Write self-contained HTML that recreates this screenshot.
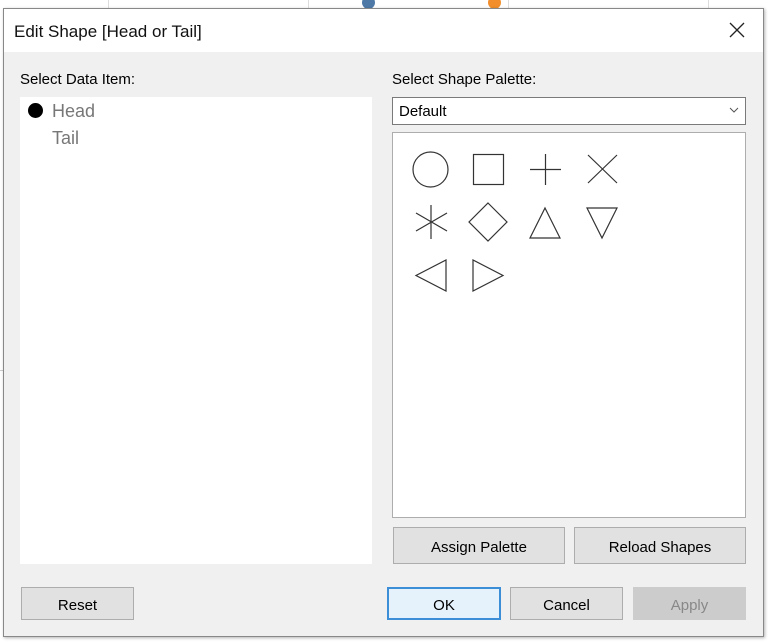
<!DOCTYPE html>
<html><head><style>
body{margin:0;width:768px;height:643px;background:#fff;position:relative;overflow:hidden;font-family:"Liberation Sans",sans-serif;}
.a{position:absolute;box-sizing:border-box;}
.btn{position:absolute;box-sizing:border-box;background:#e1e1e1;border:1px solid #adadad;font-size:15px;color:#000;display:flex;align-items:center;justify-content:center;padding-top:3px;}
.lbl{position:absolute;font-size:15px;color:#000;}
</style></head><body>
<div class="a" style="left:108px;top:0;width:1px;height:8px;background:#ddd"></div>
<div class="a" style="left:308px;top:0;width:1px;height:8px;background:#ddd"></div>
<div class="a" style="left:508px;top:0;width:1px;height:8px;background:#ddd"></div>
<div class="a" style="left:708px;top:0;width:1px;height:8px;background:#ddd"></div>
<div class="a" style="left:362px;top:-4px;width:13px;height:13px;border-radius:50%;background:#4e79a7"></div>
<div class="a" style="left:488px;top:-4px;width:13px;height:13px;border-radius:50%;background:#f28e2b"></div>
<div class="a" style="left:0;top:370px;width:4px;height:1px;background:#ccc"></div>
<div class="a" style="left:3px;top:8px;width:761px;height:629px;background:#f0f0f0;border:1px solid #888;box-shadow:1px 1px 3px rgba(0,0,0,.3)"></div>
<div class="a" style="left:4px;top:9px;width:759px;height:43px;background:#fff"></div>
<div class="lbl" style="left:14px;top:22px;font-size:17px;color:#111">Edit Shape [Head or Tail]</div>
<svg class="a" style="left:728px;top:21px" width="18" height="18"><path d="M2 2L16 16M16 2L2 16" stroke="#222" stroke-width="1.3"/></svg>
<div class="lbl" style="left:20px;top:71px">Select Data Item:</div>
<div class="a" style="left:20px;top:97px;width:352px;height:467px;background:#fff"></div>
<div class="a" style="left:28px;top:103px;width:15px;height:15px;border-radius:50%;background:#000"></div>
<div class="lbl" style="left:52px;top:101px;font-size:18px;color:#777">Head</div>
<div class="lbl" style="left:52px;top:128px;font-size:18px;color:#777">Tail</div>
<div class="lbl" style="left:392px;top:71px">Select Shape Palette:</div>
<div class="a" style="left:392px;top:97px;width:354px;height:28px;background:#fff;border:1px solid #7a7a7a"></div>
<div class="lbl" style="left:399px;top:103px">Default</div>
<svg class="a" style="left:729px;top:106px" width="10" height="8"><path d="M1 2L5 6L9 2" stroke="#555" fill="none"/></svg>
<div class="a" style="left:392px;top:132px;width:354px;height:386px;background:#fff;border:1px solid #adadad"></div>
<svg class="a" style="left:0;top:0" width="768" height="643" fill="none" stroke="#333" stroke-width="1.2">
<circle cx="430.5" cy="169.5" r="17.5"/>
<rect x="473.5" y="154.5" width="30" height="30"/>
<path d="M545.5 154V185M530 169.5H561"/>
<path d="M588 155L617 183M617 155L588 183"/>
<path d="M431 205V239M416 213L447 231M447 213L416 231"/>
<path d="M488 203L507 222L488 241L469 222Z"/>
<path d="M545 208L560 238H530Z"/>
<path d="M587 208H617L602 238Z"/>
<path d="M446 260V291L416 275.5Z"/>
<path d="M473 260V291L503 275.5Z"/>
</svg>
<div class="btn" style="left:393px;top:527px;width:172px;height:37px">Assign Palette</div>
<div class="btn" style="left:574px;top:527px;width:172px;height:37px">Reload Shapes</div>
<div class="btn" style="left:21px;top:587px;width:113px;height:33px">Reset</div>
<div class="btn" style="left:387px;top:587px;width:114px;height:33px;border:2px solid #3c8fd6;background:#e5f1fb">OK</div>
<div class="btn" style="left:510px;top:587px;width:113px;height:33px">Cancel</div>
<div class="btn" style="left:633px;top:587px;width:113px;height:33px;background:#cccccc;border-color:#cccccc;color:#888">Apply</div>
</body></html>
